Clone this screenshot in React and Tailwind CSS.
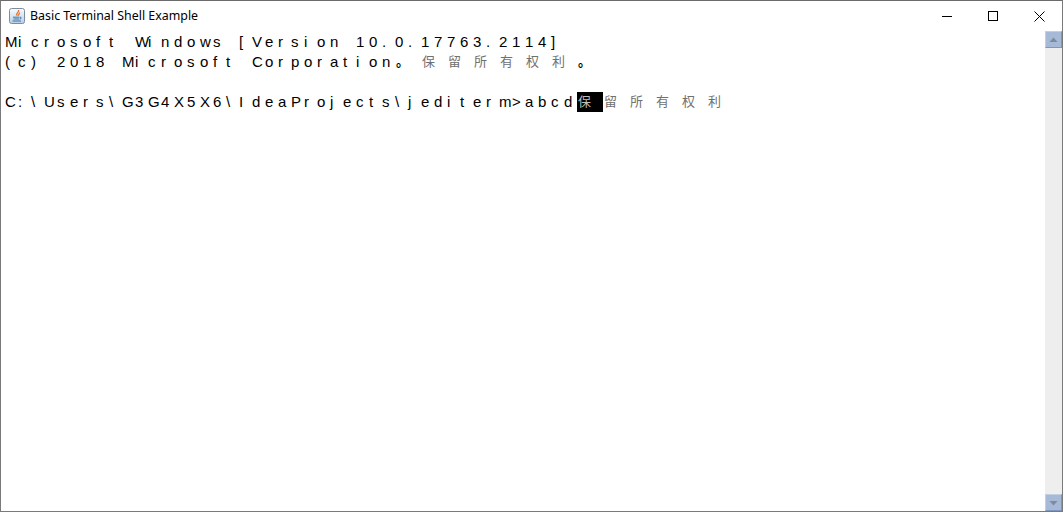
import React from "react";

const LINES = [
  [{ text: "Microsoft Windows [Version 10.0.17763.2114]" }],
  [
    { text: "(c) 2018 Microsoft Corporation" },
    { text: "。", wide: true, dark: true },
    { text: "保留所有权利", wide: true },
    { text: "。", wide: true, dark: true },
  ],
  [],
  [
    { text: "C:\\Users\\G3G4X5X6\\IdeaProjects\\jediterm>abcd" },
    { text: "保", wide: true, cursor: true },
    { text: "留所有权利", wide: true },
  ],
];

const JavaIcon = () => (
  <svg width="16" height="16" viewBox="0 0 16 16" className="shrink-0">
    <defs>
      <linearGradient id="tile" x1="0" y1="0" x2="0" y2="1">
        <stop offset="0" stopColor="#f8fbfe" />
        <stop offset="1" stopColor="#b9cfe4" />
      </linearGradient>
    </defs>
    <rect x="0.5" y="0.5" width="15" height="15" rx="2" fill="url(#tile)" stroke="#7f8c9c" />
    <path d="M9.5 2C10.5 4 7 5 7.5 7.5M10.5 4.5C11 6 9 6.5 9 8" fill="none" stroke="#e8712a" strokeWidth="1.3" />
    <path d="M4 9.2h6.5M11 9c1.5 0 1.5 1.8 0 2" fill="none" stroke="#3d75a8" strokeWidth="1" />
    <path d="M4.5 11h6M3.5 13h8.5" fill="none" stroke="#3d75a8" strokeWidth="1.1" />
  </svg>
);

const ScrollButton = ({ up }) => (
  <div className="h-[17px] shrink-0 flex items-center justify-center bg-[#a6b9d6] border border-[#7f96bd] border-t-[#c3d0e4] border-l-[#c3d0e4]">
    <svg width="9" height="6" viewBox="0 0 9 6">
      <path d={up ? "M4.5 0.5L8.5 5H0.5Z" : "M0.5 1H8.5L4.5 5.5Z"} fill="#7d8ba0" />
    </svg>
  </div>
);

const wideColor = (run) => {
  if (run.cursor) return "bg-black text-[#bdbdbd]";
  if (run.dark) return "text-black font-bold";
  return "text-[#707070]";
};

const Row = ({ runs }) => (
  <div className="flex h-5 items-center">
    {runs.flatMap((run, i) =>
      Array.from(run.text).map((ch, j) =>
        run.wide ? (
          <span
            key={`${i}-${j}`}
            className={`w-[26px] h-5 shrink-0 pl-px text-[13px] leading-[17px] font-['Noto_Sans_CJK_SC',sans-serif] ${wideColor(run)}`}
          >
            {ch}
          </span>
        ) : (
          <span key={`${i}-${j}`} className="w-[13px] h-5 shrink-0 text-[15px] leading-5 text-black whitespace-pre">
            {ch}
          </span>
        )
      )
    )}
  </div>
);

export default function App() {
  return (
    <div className="w-[1063px] h-[512px] flex flex-col bg-white border border-[#7a7a7a] border-t-[#6a6a6a] font-['Liberation_Sans',Arial,sans-serif] overflow-hidden">
      <div className="h-[30px] shrink-0 flex items-center pl-2">
        <JavaIcon />
        <span className="ml-[5px] text-[12.4px] text-black font-['Noto_Sans',sans-serif]">Basic Terminal Shell Example</span>
        <div className="ml-auto flex items-center">
          <div className="w-[46px] h-[30px] flex items-center justify-center">
            <div className="w-[10px] h-px bg-black" />
          </div>
          <div className="w-[46px] h-[30px] flex items-center justify-center">
            <div className="w-[10px] h-[10px] border border-black" />
          </div>
          <div className="w-[46px] h-[30px] flex items-center justify-center">
            <svg width="11" height="11" viewBox="0 0 11 11">
              <path d="M0.5 0.5L10.5 10.5M10.5 0.5L0.5 10.5" stroke="#000" strokeWidth="1" />
            </svg>
          </div>
        </div>
      </div>
      <div className="flex-1 flex min-h-0">
        <div className="flex-1 pl-1 pt-[1px]">
          {LINES.map((runs, i) => (
            <Row key={i} runs={runs} />
          ))}
        </div>
        <div className="w-[17px] flex flex-col bg-[#eeeeee]">
          <ScrollButton up />
          <div className="flex-1" />
          <ScrollButton />
        </div>
      </div>
    </div>
  );
}
